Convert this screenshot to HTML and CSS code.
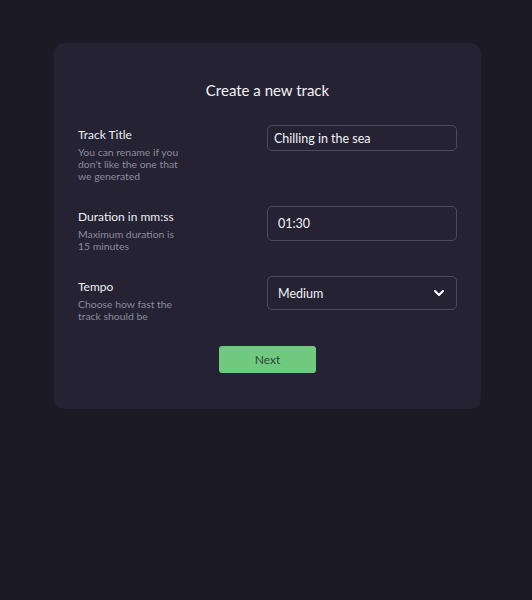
FILE: index.html
```html
<!DOCTYPE html>
<html lang="en">

<head>
    <title>Create a new track</title>
    <meta charset="UTF-8">
    <meta name="viewport" content="width=device-width, initial-scale=1">
    <link rel="stylesheet" href="styles.css">
</head>

<body>
    <main class="card">
        <h1>Create a new track</h1>
        <div class="field">
            <div class="field-text">
                <label class="field-label" for="title">Track Title</label>
                <p class="field-hint">You can rename if you don't like the one that we generated</p>
            </div>
            <input class="input input-short" id="title" type="text" value="Chilling in the sea">
        </div>
        <div class="field">
            <div class="field-text">
                <label class="field-label" for="duration">Duration in mm:ss</label>
                <p class="field-hint">Maximum duration is 15 minutes</p>
            </div>
            <input class="input" id="duration" type="text" value="01:30">
        </div>
        <div class="field">
            <div class="field-text">
                <label class="field-label" for="tempo">Tempo</label>
                <p class="field-hint">Choose how fast the track should be</p>
            </div>
            <div class="select">
                <span>Medium</span>
                <svg width="12" height="8" viewBox="0 0 12 8">
                    <path d="M2 2 L6 6 L10 2" fill="none" stroke="#fff" stroke-width="2" stroke-linecap="round" stroke-linejoin="round"/>
                </svg>
            </div>
        </div>
        <button type="button" class="next">Next</button>
    </main>
</body>

</html>
```

FILE: styles.css
```css
html {
    height: 100%;
}

body {
    margin: 0;
    padding: 43px 0 0 54px;
    background-color: #1c1b25;
    color: #eeeef2;
    font-family: Lato, "Open Sans", sans-serif;
}

.card {
    box-sizing: border-box;
    width: 427px;
    padding: 36px 24px 36px;
    background-color: #242233;
    border-radius: 10px;
    display: flex;
    flex-direction: column;
    gap: 24px;
}

h1 {
    margin: 0;
    font-size: 15px;
    line-height: 22px;
    font-weight: normal;
    text-align: center;
    color: #f2f2f6;
}

.field {
    display: grid;
    grid-template-columns: 1fr 190px;
    align-items: start;
}

.field-text {
    padding-top: 2px;
    width: 104px;
}

.field:nth-child(3) .field-text,
.field:nth-child(4) .field-text {
    padding-top: 3px;
}

.field-label {
    display: block;
    font-size: 12px;
    line-height: 16px;
    white-space: nowrap;
}

.field-hint {
    margin: 3px 0 0;
    font-size: 10.4px;
    line-height: 12px;
    color: #8e8c9b;
}

.input,
.select {
    box-sizing: border-box;
    width: 190px;
    height: 35px;
    padding: 0 10px;
    background: none;
    border: 1px solid #4c4a5c;
    border-radius: 5px;
    color: #f2f2f6;
    font-family: inherit;
    font-size: 12.5px;
    outline: none;
}

.input-short {
    height: 26px;
    padding: 0 6px;
}

.select {
    height: 34px;
    display: flex;
    align-items: center;
    justify-content: space-between;
    padding-right: 11px;
}

.next {
    align-self: center;
    width: 97px;
    height: 27px;
    border: none;
    border-radius: 3px;
    background-color: #6fca80;
    color: #2d4733;
    font-family: inherit;
    font-size: 12px;
    cursor: pointer;
}
```
